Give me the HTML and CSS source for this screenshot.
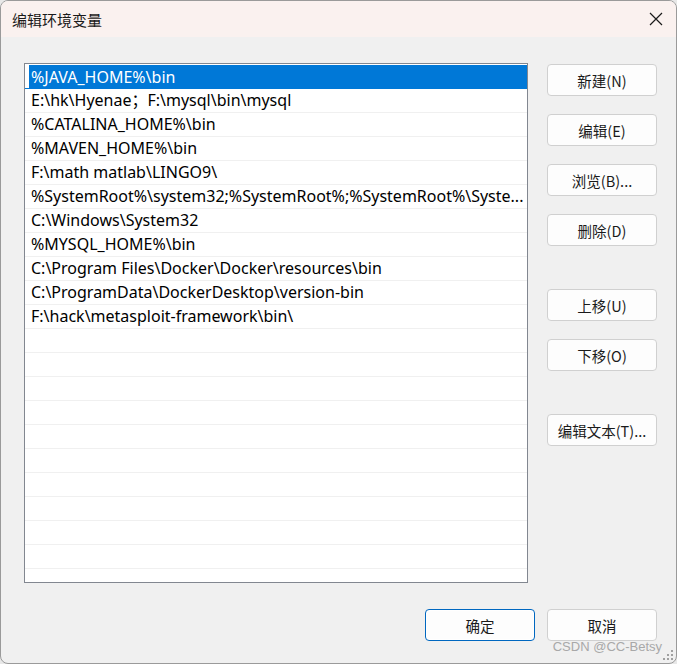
FILE: index.html
```html
<!DOCTYPE html>
<html lang="zh-CN">
<head>
    <meta charset="UTF-8">
    <title>编辑环境变量</title>
    <link rel="stylesheet" href="styles.css">
</head>
<body>
    <div class="window">
        <div class="titlebar">
            <span class="title">编辑环境变量</span>
            <svg class="close" width="14" height="14" viewBox="0 0 14 14">
                <path d="M1 1 L13 13 M13 1 L1 13" stroke="#1a1a1a" stroke-width="1.2" fill="none"/>
            </svg>
        </div>

        <div class="content">
            <div class="main">
                <div class="list">
                    <div class="row selected"><span class="cell">%JAVA_HOME%\bin</span></div>
                    <div class="row"><span class="cell">E:\hk\Hyenae；F:\mysql\bin\mysql</span></div>
                    <div class="row"><span class="cell">%CATALINA_HOME%\bin</span></div>
                    <div class="row"><span class="cell">%MAVEN_HOME%\bin</span></div>
                    <div class="row"><span class="cell">F:\math matlab\LINGO9\</span></div>
                    <div class="row"><span class="cell">%SystemRoot%\system32;%SystemRoot%;%SystemRoot%\Syste...</span></div>
                    <div class="row"><span class="cell">C:\Windows\System32</span></div>
                    <div class="row"><span class="cell">%MYSQL_HOME%\bin</span></div>
                    <div class="row"><span class="cell">C:\Program Files\Docker\Docker\resources\bin</span></div>
                    <div class="row"><span class="cell">C:\ProgramData\DockerDesktop\version-bin</span></div>
                    <div class="row"><span class="cell">F:\hack\metasploit-framework\bin\</span></div>
                    <div class="row"></div>
                    <div class="row"></div>
                    <div class="row"></div>
                    <div class="row"></div>
                    <div class="row"></div>
                    <div class="row"></div>
                    <div class="row"></div>
                    <div class="row"></div>
                    <div class="row"></div>
                    <div class="row"></div>
                    <div class="row"></div>
                </div>

                <div class="side">
                    <div class="group">
                        <button class="btn">新建(N)</button>
                        <button class="btn">编辑(E)</button>
                        <button class="btn">浏览(B)...</button>
                        <button class="btn">删除(D)</button>
                    </div>
                    <div class="group">
                        <button class="btn">上移(U)</button>
                        <button class="btn">下移(O)</button>
                    </div>
                    <div class="group">
                        <button class="btn">编辑文本(T)...</button>
                    </div>
                </div>
            </div>

            <div class="footer">
                <button class="btn default">确定</button>
                <button class="btn">取消</button>
            </div>
        </div>

        <span class="watermark">CSDN @CC-Betsy</span>
        <svg class="grip" width="12" height="12" viewBox="0 0 12 12">
            <rect x="9" y="1" width="2" height="2" fill="#a0a0a0"/>
            <rect x="5" y="5" width="2" height="2" fill="#a0a0a0"/>
            <rect x="9" y="5" width="2" height="2" fill="#a0a0a0"/>
            <rect x="1" y="9" width="2" height="2" fill="#a0a0a0"/>
            <rect x="5" y="9" width="2" height="2" fill="#a0a0a0"/>
            <rect x="9" y="9" width="2" height="2" fill="#a0a0a0"/>
        </svg>
    </div>
</body>
</html>
```

FILE: styles.css
```css
* {
    box-sizing: border-box;
}
body {
    margin: 0;
    background: #e8e8e8;
    font-family: "Segoe UI", "Noto Sans", "Noto Sans CJK SC", sans-serif;
}
.window {
    position: relative;
    width: 677px;
    height: 664px;
    background: #f0f0f0;
    border: 1px solid #9a9a9a;
    border-radius: 8px;
    overflow: hidden;
}
.titlebar {
    height: 36px;
    background: #faf1ef;
    display: flex;
    align-items: center;
    justify-content: space-between;
    padding: 0 13px 0 11px;
}
.title {
    font-family: "Noto Sans CJK SC", sans-serif;
    font-size: 15px;
    color: #1a1a1a;
}
.content {
    padding: 26px 19px 0 23px;
}
.main {
    display: flex;
    gap: 19px;
}
.list {
    width: 504px;
    height: 520px;
    background: #fff;
    border: 1px solid #828790;
    padding-top: 1px;
    overflow: hidden;
}
.row {
    height: 24px;
    border-bottom: 1px solid #f0f0f0;
    display: flex;
}
.cell {
    flex: 1;
    margin-left: 4px;
    padding: 0 2px 0 2px;
    font-size: 16px;
    line-height: 23px;
    color: #000;
    white-space: nowrap;
}
.selected {
    border-bottom-color: #0078d7;
}
.selected .cell {
    background: #0078d7;
    color: #fff;
    line-height: 24px;
}
.side {
    display: flex;
    flex-direction: column;
    gap: 43px;
    padding-top: 1px;
}
.group {
    display: flex;
    flex-direction: column;
    gap: 18px;
}
.btn {
    width: 110px;
    height: 32px;
    background: #fdfdfd;
    border: 1px solid #d0d0d0;
    border-radius: 4px;
    font-family: "Noto Sans CJK SC", sans-serif;
    font-size: 14.5px;
    color: #1a1a1a;
    padding: 0;
}
.footer {
    display: flex;
    justify-content: flex-end;
    gap: 12px;
    margin-top: 26px;
}
.btn.default {
    border: 1px solid #0067c0;
    box-shadow: inset 0 0 0 1px #ffffff;
}
.watermark {
    position: absolute;
    right: 14px;
    bottom: 9px;
    font-family: "Liberation Sans", Arial, sans-serif;
    font-size: 13px;
    color: #a8a8a8;
}
.grip {
    position: absolute;
    right: 2px;
    bottom: 2px;
}
```
